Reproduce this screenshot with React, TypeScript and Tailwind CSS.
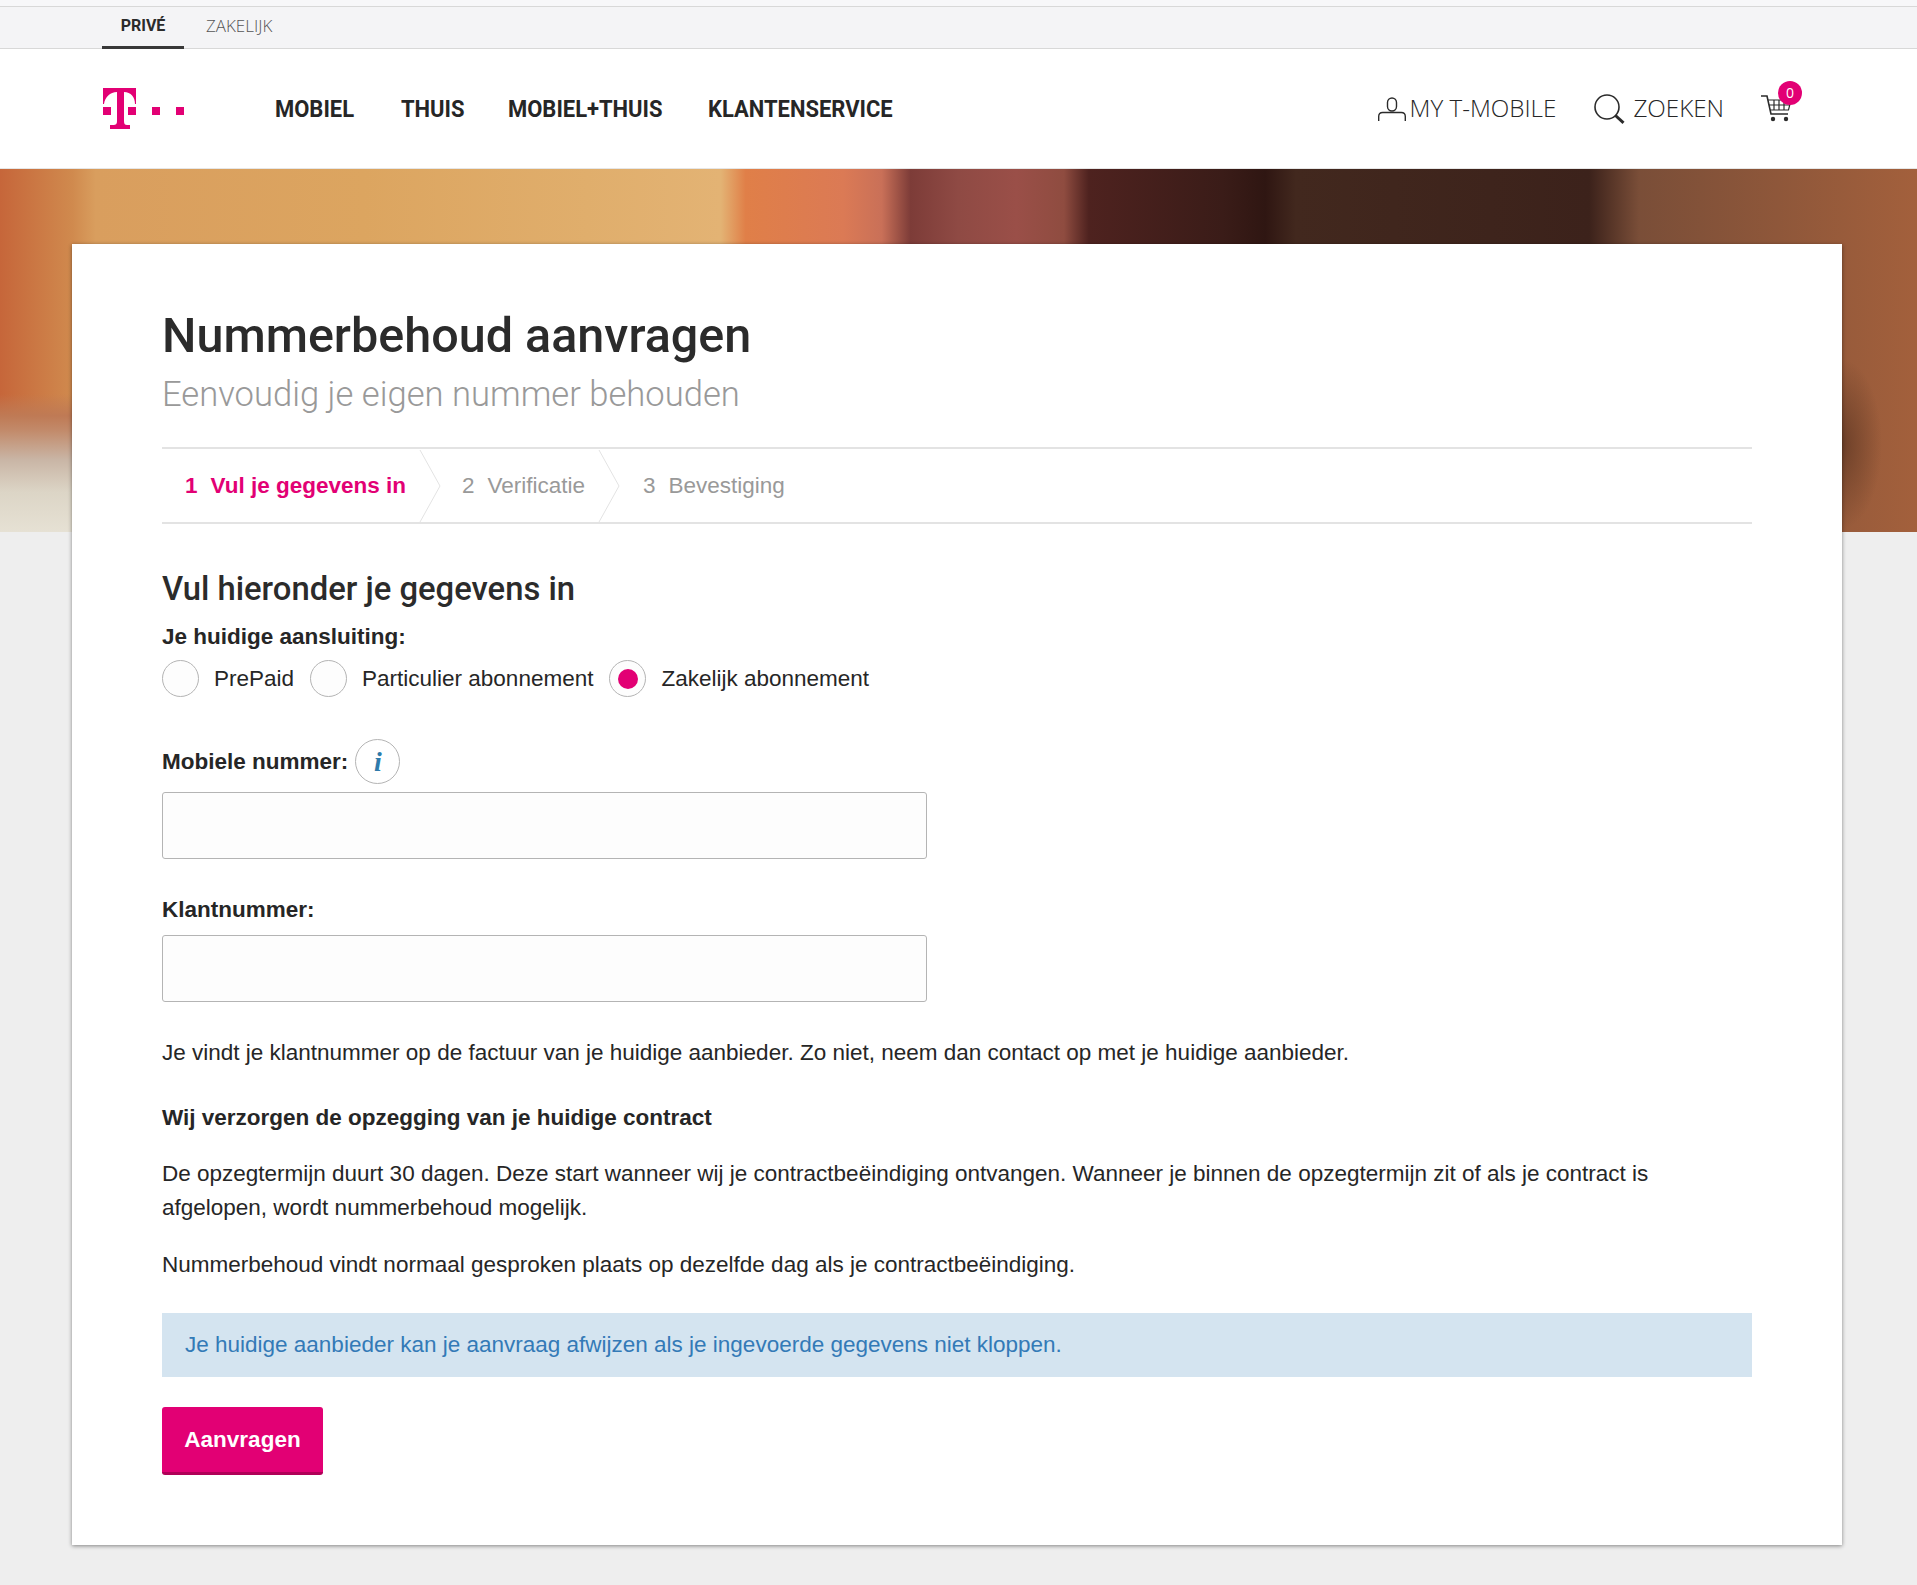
import React from "react";

const Logo = () => (
  <svg width="82" height="41" viewBox="0 0 82 41" fill="#e20074">
    <path d="M1 0H34V16H33C33 9 29 4 22 4V33C22 36 23 37 25 37H28V41H8V37H11C14 37 15 36 15 33V4C8 4 3 9 2 16H1Z" />
    <rect x="1" y="19" width="8" height="8" />
    <rect x="26" y="19" width="8" height="8" />
    <rect x="50" y="19" width="8" height="8" />
    <rect x="74" y="19" width="8" height="8" />
  </svg>
);

const UserIcon = () => (
  <svg width="28" height="24" viewBox="0 0 28 24" fill="none" stroke="#2b2b2b" strokeWidth="1.4">
    <rect x="9.500" y="1" width="9" height="13" rx="4.500" />
    <path d="M.7 24v-4.500c0-2.500 1.500-4 4-4h18.600c2.500 0 4 1.500 4 4V24" />
  </svg>
);

const SearchIcon = () => (
  <svg width="31" height="30" viewBox="0 0 31 30" fill="none" stroke="#2b2b2b">
    <circle cx="13" cy="13" r="12" strokeWidth="1.600" />
    <path d="M21.500 21.500l8 7.300" strokeWidth="3" />
  </svg>
);

const CartIcon = () => (
  <svg width="31" height="27" viewBox="0 0 31 27" fill="none" stroke="#2b2b2b" strokeWidth="1.200">
    <path d="M0 1h6l4 18h17" strokeWidth="1.600" />
    <path d="M7 5h23l-2.500 10H9.200M8 10h21M13 5v10M18 5v10M23 5v10" />
    <circle cx="12" cy="24" r="2.200" fill="#2b2b2b" stroke="none" />
    <circle cx="25" cy="24" r="2.200" fill="#2b2b2b" stroke="none" />
  </svg>
);

const Step = ({ n, label, active, className }: { n: string; label: string; active?: boolean; className: string }) => (
  <div className={`flex h-full items-center ${className} ${active ? "font-bold text-[#e20074]" : "text-[#999999]"}`}>
    <span className="mr-[13px]">{n}</span>
    <span>{label}</span>
  </div>
);

const Chevron = ({ className }: { className: string }) => (
  <svg className={`absolute top-px ${className}`} width="22" height="72" viewBox="0 0 22 72" fill="none" stroke="#e3e3e3">
    <path d="M1 0l20 36L1 72" />
  </svg>
);

const Radio = ({ checked }: { checked?: boolean }) => (
  <span className="flex h-[37px] w-[37px] shrink-0 items-center justify-center rounded-full border border-[#b4b4b4] bg-[#fdfdfd]">
    {checked && <span className="h-[20px] w-[20px] rounded-full bg-[#e20074]" />}
  </span>
);

const NavItem = ({ w, children }: { w: string; children: string }) => (
  <span className={`inline-block origin-left scale-x-[0.915] whitespace-nowrap ${w}`}>{children}</span>
);

export default function App() {
  return (
    <div className="min-h-[1585px] bg-[#eeeeee] font-['Liberation_Sans',Arial,sans-serif] text-[22.5px] leading-[34px] text-[#262626]">
      <div className="h-[6px] bg-[#f7f7f9]" />
      <div className="h-[43px] border-y border-[#d8d8d8] bg-[#f4f4f6] pl-[102px] font-['Roboto',sans-serif] text-[16px]">
        <div className="flex h-full items-center">
          <div className="flex h-[42px] w-[82px] items-center justify-center border-b-[3px] border-[#383838] font-bold text-[#2b2b2b]">PRIVÉ</div>
          <div className="ml-[22px] -mt-[3px] font-['Open_Sans',sans-serif] text-[17px] font-light text-[#555555]">ZAKELIJK</div>
        </div>
      </div>
      <header className="flex h-[120px] items-center border-b border-[#e6e6e6] bg-white pl-[102px] pr-[125px]">
        <Logo />
        <nav className="ml-[91px] flex gap-[45px] font-['Roboto',sans-serif] text-[24px] font-bold text-[#262626]">
          <NavItem w="w-[81px]">MOBIEL</NavItem>
          <NavItem w="w-[62px]">THUIS</NavItem>
          <NavItem w="w-[155px]">MOBIEL+THUIS</NavItem>
          <NavItem w="w-[185px]">KLANTENSERVICE</NavItem>
        </nav>
        <div className="ml-auto flex items-center font-['Open_Sans',sans-serif] text-[24.200px] font-light text-[#262626]">
          <UserIcon />
          <span className="ml-[4px] -mt-[2px]">MY T-MOBILE</span>
          <span className="ml-[38px]"><SearchIcon /></span>
          <span className="ml-[8px] -mt-[2px]">ZOEKEN</span>
          <span className="relative ml-[37px] block h-[27px]">
            <CartIcon />
            <span className="absolute -right-[10px] -top-[14px] flex h-[24px] w-[24px] items-center justify-center rounded-full bg-[#e20074] text-[14px] font-normal text-white">0</span>
          </span>
        </div>
      </header>
      <div className="h-[363px] bg-[radial-gradient(ellipse_40px_85px_at_1842px_275px,rgba(95,55,35,0.75),rgba(95,55,35,0)),linear-gradient(180deg,rgba(190,120,85,0)_62%,#bf7a55_68%,#c28a6a_72%,#c9b5a5_80%,#dcd5c6_89%,#e6e1d4_100%),linear-gradient(90deg,#c6663a_0%,#d08a4e_3.800%,#d99e5e_5%,#dca560_19%,#e0ae6c_30.600%,#e3b374_37.600%,#e07f48_38.900%,#db7a55_44%,#c97058_46%,#7d3c38_47.500%,#8f4a44_50%,#9a4f48_53%,#8f4c40_55.500%,#4e221f_56.800%,#3a1c18_63.800%,#2f1612_66%,#42281e_67.600%,#3c221b_82.900%,#7a4e38_85.500%,#a3603c_100%)] bg-[length:100%_100%,72px_100%,100%_100%] bg-no-repeat" />
      <main className="relative ml-[72px] -mt-[288px] h-[1301px] w-[1770px] bg-white px-[90px] pt-[64px] shadow-[0_1px_4px_rgba(0,0,0,0.45)]">
        <h1 className="font-['Roboto',sans-serif] text-[48.500px] font-medium leading-[56px] text-[#2b2b2b]">Nummerbehoud aanvragen</h1>
        <p className="mt-[8px] font-['Roboto',sans-serif] text-[34.600px] font-light leading-[44px] text-[#999999]">Eenvoudig je eigen nummer behouden</p>
        <div className="relative mt-[31px] flex h-[77px] border-y-2 border-[#e3e3e3]">
          <Step n="1" label="Vul je gegevens in" active className="w-[258px] pl-[23px]" />
          <Step n="2" label="Verificatie" className="w-[179px] pl-[42px]" />
          <Step n="3" label="Bevestiging" className="w-[180px] pl-[44px]" />
          <Chevron className="left-[257px]" />
          <Chevron className="left-[436px]" />
        </div>
        <h2 className="mt-[45px] font-['Roboto',sans-serif] text-[32.800px] font-medium leading-[40px] text-[#2b2b2b]">Vul hieronder je gegevens in</h2>
        <div className="mt-[11px] font-bold">Je huidige aansluiting:</div>
        <div className="mt-[6px] flex items-center">
          <Radio />
          <span className="ml-[15px] mr-[16px]">PrePaid</span>
          <Radio />
          <span className="ml-[15px] mr-[16px]">Particulier abonnement</span>
          <Radio checked />
          <span className="ml-[15px]">Zakelijk abonnement</span>
        </div>
        <div className="mt-[42px] flex items-center font-bold">
          <span>Mobiele nummer:</span>
          <span className="ml-[7px] flex h-[45px] w-[45px] items-center justify-center rounded-full border border-[#b4b4b4] font-['Liberation_Serif',serif] text-[28px] font-bold italic text-[#2f7bab]">i</span>
        </div>
        <div className="mt-[8px] h-[67px] w-[765px] rounded-[3px] border border-[#b4b4b4] bg-[#fdfdfd]" />
        <div className="mt-[34px] font-bold">Klantnummer:</div>
        <div className="mt-[8px] h-[67px] w-[765px] rounded-[3px] border border-[#b4b4b4] bg-[#fdfdfd]" />
        <p className="mt-[34px]">Je vindt je klantnummer op de factuur van je huidige aanbieder. Zo niet, neem dan contact op met je huidige aanbieder.</p>
        <p className="mt-[31px] font-bold">Wij verzorgen de opzegging van je huidige contract</p>
        <p className="mt-[22px]">De opzegtermijn duurt 30 dagen. Deze start wanneer wij je contractbeëindiging ontvangen. Wanneer je binnen de opzegtermijn zit of als je contract is afgelopen, wordt nummerbehoud mogelijk.</p>
        <p className="mt-[23px]">Nummerbehoud vindt normaal gesproken plaats op dezelfde dag als je contractbeëindiging.</p>
        <div className="mt-[31px] flex h-[64px] items-center bg-[#d4e4f0] px-[23px] text-[#337ab7]">Je huidige aanbieder kan je aanvraag afwijzen als je ingevoerde gegevens niet kloppen.</div>
        <button className="mt-[30px] flex h-[68px] w-[161px] items-center justify-center rounded-[3px] border-b-[3px] border-[#b00058] bg-[#e20074] font-bold text-white">Aanvragen</button>
      </main>
    </div>
  );
}
